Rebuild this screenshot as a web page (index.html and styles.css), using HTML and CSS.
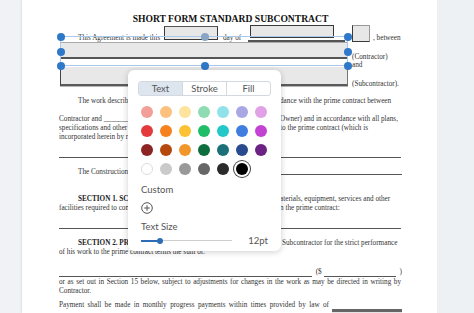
FILE: index.html
```html
<!DOCTYPE html>
<html>
<head>
<meta charset="utf-8">
<link rel="stylesheet" href="styles.css">
</head>
<body>
<div class="app">
  <div class="gutter"></div>
  <div class="page">
    <h1 class="title">SHORT FORM STANDARD SUBCONTRACT</h1>

    <div class="form-top">
      <div class="agree">
        <span class="t-agree">This Agreement is made this</span>
        <span class="box box-a"></span>
        <span class="t-day">day of</span>
        <span class="blank-b"><span class="box box-b"></span></span>
        <span class="box box-c"></span>
        <span class="t-between">, between</span>
      </div>
      <div class="party">
        <div class="field field-1"></div>
        <div class="plabel"><span>(Contractor)</span></div>
      </div>
      <div class="party party-2">
        <div class="field field-2"></div>
        <div class="plabel plabel-2"><span>and</span><span>(Subcontractor).</span></div>
      </div>

      <div class="selection">
        <span class="h h-tl"></span>
        <span class="h h-tm dim"></span>
        <span class="h h-tr"></span>
        <span class="h h-ml"></span>
        <span class="h h-mr"></span>
        <span class="h h-bl"></span>
        <span class="h h-bm"></span>
        <span class="h h-br"></span>
      </div>
    </div>

    <div class="row gap-a">
      <div class="l ind">The work described herein shall be performed in accor</div>
      <div class="r">dance with the prime contract between</div>
    </div>
    <div class="row gap-b">
      <div class="l">Contractor and ________________ (the</div>
      <div class="r">Owner) and in accordance with all plans,</div>
    </div>
    <div class="row">
      <div class="l">specifications and other contract documents applicable</div>
      <div class="r">to the prime contract (which is</div>
    </div>
    <div class="row">
      <div class="l">incorporated herein by reference) for the project:</div>
      <div class="r"></div>
    </div>
    <div class="rule rule-1"></div>

    <div class="row gap-c">
      <div class="l ind">The Construction Project located at:</div>
      <div class="r"><div class="r-line"></div></div>
    </div>

    <div class="row gap-d">
      <div class="l ind b">SECTION 1. SCOPE. Subcontractor shall furnish m</div>
      <div class="r">aterials, equipment, services and other</div>
    </div>
    <div class="row">
      <div class="l">facilities required to complete the work described i</div>
      <div class="r">n the prime contract:</div>
    </div>
    <div class="rule rule-2"></div>

    <div class="row gap-c">
      <div class="l ind b">SECTION 2. PRICE. Contractor shall pay</div>
      <div class="r r-shift">Subcontractor for the strict performance</div>
    </div>
    <div class="row">
      <div class="full">of his work to the prime contract terms the sum of:</div>
    </div>

    <div class="sum-row">
      <span class="sum-line sum-a"></span>
      <span class="sum-t">($</span>
      <span class="sum-line sum-b"></span>
      <span class="sum-t">)</span>
    </div>
    <div class="row just-row">
      <div class="just">or as set out in Section 15 below, subject to adjustments for changes in the work as may be directed in writing by</div>
    </div>
    <div class="row">
      <div class="full">Contractor.</div>
    </div>
    <div class="row pay-row">
      <div class="just pay">Payment shall be made in monthly progress payments within times provided by law of</div>
      <div class="pay-field"></div>
    </div>
  </div>
  <div class="side"></div>

  <div class="popover">
    <div class="seg">
      <span class="seg-i active">Text</span>
      <span class="seg-i">Stroke</span>
      <span class="seg-i">Fill</span>
    </div>
    <div class="swatches">
      <span class="sw" style="background:#f19f98"></span>
      <span class="sw" style="background:#fcc07f"></span>
      <span class="sw" style="background:#fde39d"></span>
      <span class="sw" style="background:#8fdcb2"></span>
      <span class="sw" style="background:#91e1ea"></span>
      <span class="sw" style="background:#a9a6e4"></span>
      <span class="sw" style="background:#e2a1e6"></span>

      <span class="sw" style="background:#e33b3b"></span>
      <span class="sw" style="background:#f5821e"></span>
      <span class="sw" style="background:#fcc233"></span>
      <span class="sw" style="background:#20bd68"></span>
      <span class="sw" style="background:#22c8c8"></span>
      <span class="sw" style="background:#3f7de0"></span>
      <span class="sw" style="background:#c342d2"></span>

      <span class="sw" style="background:#8c2424"></span>
      <span class="sw" style="background:#b4480d"></span>
      <span class="sw" style="background:#f1962b"></span>
      <span class="sw" style="background:#0e6d3d"></span>
      <span class="sw" style="background:#1b7077"></span>
      <span class="sw" style="background:#284a8e"></span>
      <span class="sw" style="background:#6c2282"></span>

      <span class="sw sw-white"></span>
      <span class="sw" style="background:#cacaca"></span>
      <span class="sw" style="background:#999999"></span>
      <span class="sw" style="background:#676767"></span>
      <span class="sw" style="background:#2a2a2a"></span>
      <span class="sw sw-sel" style="background:#000000"></span>
    </div>
    <div class="p-label custom">Custom</div>
    <svg class="plus" width="12" height="12" viewBox="0 0 12 12">
      <circle cx="6" cy="6" r="5.3" fill="none" stroke="#555" stroke-width="1"/>
      <path d="M6 3.2V8.8M3.2 6H8.8" stroke="#555" stroke-width="1" fill="none"/>
    </svg>
    <div class="p-label tsize">Text Size</div>
    <div class="slider-row">
      <div class="slider">
        <span class="track"></span>
        <span class="fill"></span>
        <span class="thumb"></span>
      </div>
      <span class="pt">12pt</span>
    </div>
  </div>
</div>
</body>
</html>
```

FILE: styles.css
```css
* { box-sizing: border-box; }
html, body { margin: 0; padding: 0; }
body {
  width: 474px;
  height: 313px;
  overflow: hidden;
  background: #eef1f4;
}
.app {
  position: relative;
  display: flex;
  width: 474px;
  height: 313px;
}
.gutter {
  width: 22px;
  flex: none;
  background: #f0f2f5;
}
.side {
  width: 37px;
  flex: none;
  background: #eef1f4;
}
.page {
  width: 415px;
  flex: none;
  background: #fff;
  box-shadow: -1px 0 2px rgba(0,0,0,0.08), 1px 0 2px rgba(0,0,0,0.05);
  padding: 14px 35px 0 37px;
  font-family: "Liberation Serif", "Times New Roman", serif;
  font-size: 7.2px;
  color: #333;
  overflow: hidden;
}
.title {
  margin: 0;
  height: 10px;
  line-height: 10px;
  font-size: 9.6px;
  font-weight: bold;
  text-align: center;
  color: #111;
  white-space: nowrap;
}

/* top form */
.form-top { position: relative; }
.agree {
  display: flex;
  align-items: flex-end;
  height: 18px;
  line-height: 8px;
  white-space: nowrap;
}
.t-agree { margin-left: 19px; width: 86px; }
.box {
  display: block;
  background: #e7e7e7;
  border: 1px solid #3a3a3a;
}
.box-a {
  align-self: flex-start;
  margin-top: 2px;
  width: 54px;
  height: 14px;
  border-top-color: #555;
}
.t-day { margin-left: 5px; width: 22px; }
.blank-b {
  display: flex;
  align-items: flex-start;
  margin-left: 3px;
  width: 97px;
  height: 18px;
  border-bottom: 2px solid #555;
}
.box-b {
  margin-left: 2px;
  margin-top: 1px;
  width: 84px;
  height: 13px;
}
.box-c {
  margin-left: 7px;
  width: 18px;
  height: 17px;
  border-top-color: #999;
  border-right-color: #999;
}
.t-between { margin-left: 3px; }

.party {
  display: flex;
  height: 19px;
  white-space: nowrap;
}
.field {
  flex: none;
  margin-left: 1px;
  width: 288px;
  background: #e8e8e8;
}
.field-1 {
  height: 17px;
  border-top: 1px solid #aaa;
  border-bottom: 2px solid #555;
}
.plabel {
  margin-left: 4px;
  align-self: flex-end;
  line-height: 8px;
}
.party-2 { height: 27px; }
.field-2 {
  margin-top: 6px;
  height: 19px;
  border-left: 1px solid #444;
  border-right: 1px solid #777;
  border-bottom: 2px solid #5a5a5a;
  box-shadow: 0 1px 0 #b5b5b5;
}
.plabel-2 {
  align-self: stretch;
  display: flex;
  flex-direction: column;
  justify-content: space-between;
}

.selection {
  position: absolute;
  left: 1px;
  top: 12px;
  width: 288px;
  height: 30px;
  border: 1px solid #a9c8ea;
}
.h {
  position: absolute;
  width: 8px;
  height: 8px;
  border-radius: 50%;
  background: #2f78c9;
}
.h.dim { background: #8aa5c4; }
.h-tl { left: -4.5px; top: -4.5px; }
.h-tm { left: 139.5px; top: -4.5px; }
.h-tr { right: -4.5px; top: -4.5px; }
.h-ml { left: -4.5px; top: 10.5px; }
.h-mr { right: -4.5px; top: 10.5px; }
.h-bl { left: -4.5px; bottom: -4.5px; }
.h-bm { left: 139.5px; bottom: -4.5px; }
.h-br { right: -4.5px; bottom: -4.5px; }

/* text rows */
.row {
  display: flex;
  height: 9px;
  line-height: 9px;
  white-space: nowrap;
}
.l {
  flex: none;
  width: 221px;
  overflow: hidden;
}
.ind { padding-left: 19px; }
.b { font-weight: bold; color: #222; }
.r { flex: 1; }
.r-shift { padding-left: 2px; }
.full { flex: 1; }
.gap-a { margin-top: 9px; }
.gap-b { margin-top: 9px; }
.gap-c { margin-top: 10px; }
.gap-d { margin-top: 18px; }
.rule {
  width: 342px;
  height: 1px;
  background: #555;
}
.rule-1 { margin-top: 15px; }
.rule-2 { margin-top: 15px; }
.r-line {
  width: 122px;
  height: 7px;
  border-bottom: 1px solid #555;
}

.sum-row {
  display: flex;
  align-items: flex-end;
  height: 9px;
  margin-top: 11px;
  line-height: 9px;
}
.sum-line {
  display: block;
  height: 8px;
  border-bottom: 1px solid #555;
}
.sum-a { width: 253px; }
.sum-b { width: 72px; margin-left: 2px; }
.sum-t { margin-left: 4px; }
.just-row { margin-top: 1px; }
.just {
  width: 342px;
  text-align: justify;
  text-align-last: justify;
  white-space: normal;
}
.pay-row { margin-top: 5px; }
.pay { width: 270px; flex: none; }
.pay-field {
  margin-left: 3px;
  margin-top: 8px;
  width: 70px;
  height: 10px;
  background: #e5e5e5;
  border-top: 3px solid #666;
}

/* popover */
.popover {
  position: absolute;
  left: 128px;
  top: 70px;
  width: 153px;
  height: 181px;
  padding: 11px 10px 0 10px;
  background: #fff;
  border-radius: 6px;
  box-shadow: 0 1px 6px rgba(0,0,0,0.2);
  font-family: Lato, "Open Sans", sans-serif;
  color: #555;
}
.seg {
  display: flex;
  width: 133px;
  height: 15px;
  border: 1px solid #d3d9df;
  border-radius: 3px;
  overflow: hidden;
}
.seg-i {
  flex: 1;
  text-align: center;
  font-size: 9.5px;
  line-height: 13px;
  color: #555;
}
.seg-i + .seg-i { border-left: 1px solid #d3d9df; }
.seg-i.active { background: #dde6ef; }
.swatches {
  display: grid;
  grid-template-columns: repeat(7, 12px);
  grid-auto-rows: 12px;
  gap: 7px;
  margin-top: 10px;
  margin-left: 3px;
}
.sw {
  display: block;
  width: 12px;
  height: 12px;
  border-radius: 50%;
}
.sw-white { background: #fff; border: 1px solid #dcdcdc; }
.sw-sel { box-shadow: 0 0 0 2px #fff, 0 0 0 3px #444; }
.p-label {
  font-size: 9.5px;
  line-height: 12px;
  margin-left: 3px;
  color: #555;
}
.custom { margin-top: 9px; }
.plus { display: block; margin-top: 6px; margin-left: 3px; }
.tsize { margin-top: 7px; }
.slider-row {
  display: flex;
  align-items: center;
  justify-content: space-between;
  height: 12px;
  margin-top: 1px;
  margin-left: 3px;
}
.slider {
  position: relative;
  width: 91px;
  height: 12px;
}
.track {
  position: absolute;
  left: 0; right: 0; top: 6px;
  height: 1px;
  background: #cdcdcd;
}
.fill {
  position: absolute;
  left: 0; top: 5.5px;
  width: 19px;
  height: 2px;
  background: #2c6db5;
}
.thumb {
  position: absolute;
  left: 16px; top: 3.5px;
  width: 6px;
  height: 6px;
  border-radius: 50%;
  background: #2c6db5;
}
.pt { font-size: 9.5px; margin-right: 3px; color: #555; }
```
